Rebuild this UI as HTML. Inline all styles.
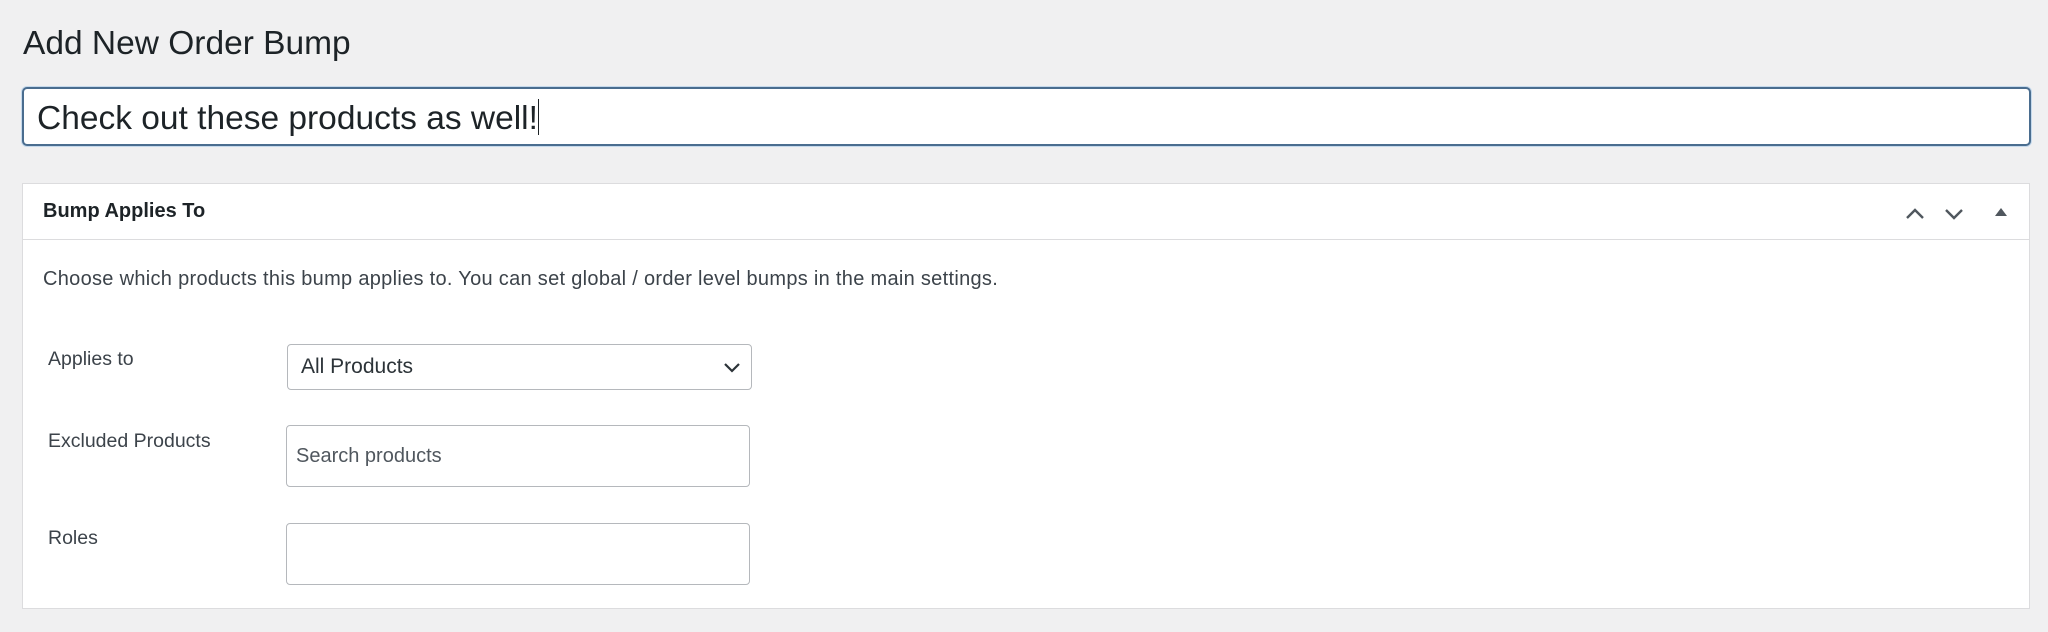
<!DOCTYPE html>
<html><head><meta charset="utf-8"><style>
*{box-sizing:border-box;margin:0;padding:0}
body{width:2048px;height:632px;background:#f0f0f1;font-family:"Liberation Sans",sans-serif;color:#1d2327;position:relative;overflow:hidden}
.a{position:absolute}
h1{position:absolute;left:23px;top:25px;font-size:33.5px;font-weight:400;color:#1d2327}
.title{left:22px;top:87px;width:2009px;height:59px;border:2px solid #4a6d8f;border-radius:5px;background:#fff;box-shadow:0 0 0 1px #c5d9ec;font-size:33.5px;padding:10px 0 0 13px;color:#1d2327;white-space:nowrap}
.cur{display:inline-block;width:1px;height:36px;background:#1d2327;vertical-align:-6px}
.panel{left:22px;top:183px;width:2008px;height:426px;background:#fff;border:1px solid #dcdcde}
.hd{left:0;top:0;width:100%;height:56px;border-bottom:1px solid #dcdcde}
.hd b{position:absolute;left:20px;top:16px;font-size:20px;color:#1d2327}
.desc{left:20px;top:84px;font-size:20px;letter-spacing:0.3px;color:#3c434a;white-space:nowrap}
.lbl{font-size:19.5px;color:#3c434a}
.box{border:1px solid #b5b8bc;border-radius:4px;background:#fff}
</style></head><body>
<h1>Add New Order Bump</h1>
<div class="a title">Check out these products as well!<span class="cur"></span></div>
<div class="a panel">
 <div class="a hd"><b>Bump Applies To</b>
  <svg class="a" style="left:1880px;top:18px" width="130" height="22" viewBox="0 0 130 22">
   <path d="M4 16 L12 8 L20 16" fill="none" stroke="#50575e" stroke-width="2.4"/>
   <path d="M43 8 L51 16 L59 8" fill="none" stroke="#50575e" stroke-width="2.4"/>
   <path d="M92 14 L98 6 L104 14Z" fill="#50575e"/>
  </svg>
 </div>
 <div class="a desc">Choose which products this bump applies to. You can set global / order level bumps in the main settings.</div>
 <div class="a lbl" style="left:25px;top:164px">Applies to</div>
 <div class="a lbl" style="left:25px;top:246px">Excluded Products</div>
 <div class="a lbl" style="left:25px;top:343px">Roles</div>
 <div class="a box" style="left:264px;top:160px;width:465px;height:46px;font-size:21px;padding:10px 0 0 13px;color:#2c3338">All Products
  <svg class="a" style="right:10px;top:15px" width="18" height="14" viewBox="0 0 18 14"><path d="M2 4 L9 11 L16 4" fill="none" stroke="#2c3338" stroke-width="2.2"/></svg>
 </div>
 <div class="a box" style="left:263px;top:241px;width:464px;height:62px;font-size:20px;padding:19px 0 0 9px;color:#50575e">Search products</div>
 <div class="a box" style="left:263px;top:339px;width:464px;height:62px"></div>
</div>
</body></html>
